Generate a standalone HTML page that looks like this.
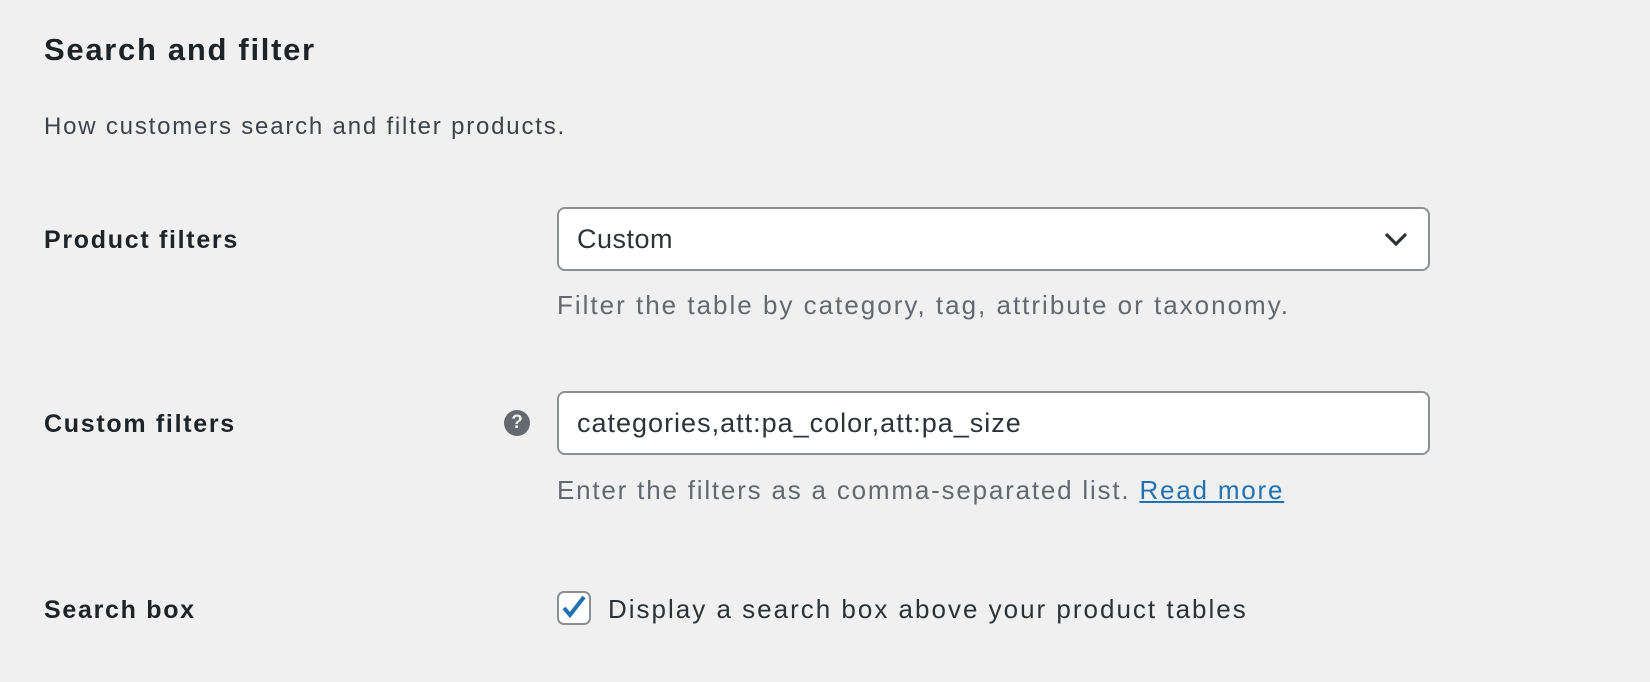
<!DOCTYPE html>
<html><head><meta charset="utf-8"><style>
*{margin:0;padding:0;box-sizing:border-box}
html,body{width:1650px;height:682px;background:#f0f0f1;overflow:hidden;font-family:"Liberation Sans",sans-serif;color:#1d2327}
.a{position:absolute;white-space:nowrap}
h2{position:absolute;left:44px;top:32px;font-size:31px;font-weight:600;letter-spacing:1.7px}
.sub{left:44px;top:113px;font-size:24px;color:#3c434a;letter-spacing:1.8px}
.lbl{left:44px;font-size:25px;font-weight:bold;letter-spacing:1.7px}
.box{position:absolute;left:557px;width:873px;height:64px;background:#fff;border:2px solid #8c8f94;border-radius:8px;font-size:27px;padding-left:18px;line-height:60px;color:#2c3338}
.help{left:557px;font-size:26px;color:#646970;letter-spacing:2px}
.help a{color:#2271b1;text-decoration:underline}
.q{position:absolute;left:504px;top:410px;width:26px;height:26px;border-radius:50%;background:#646970;color:#f0f0f1;font-size:19px;font-weight:bold;text-align:center;line-height:26px}
.cb{position:absolute;left:557px;top:591px;width:34px;height:34px;border:2px solid #8c8f94;border-radius:7px;background:#fff}
</style></head><body>
<h2>Search and filter</h2>
<div class="a sub">How customers search and filter products.</div>

<div class="a lbl" style="top:226px">Product filters</div>
<div class="box" style="top:207px;letter-spacing:0.5px">Custom
<svg style="position:absolute;right:20px;top:22px" width="24" height="16" viewBox="0 0 24 16"><path d="M2 3l10 10 10-10" fill="none" stroke="#2c3338" stroke-width="3.2"/></svg></div>
<div class="a help" style="top:290px">Filter the table by category, tag, attribute or taxonomy.</div>

<div class="a lbl" style="top:410px">Custom filters</div>
<div class="q">?</div>
<div class="box" style="top:391px;letter-spacing:1px">categories,att:pa_color,att:pa_size</div>
<div class="a help" style="top:475px;letter-spacing:1.8px">Enter the filters as a comma-separated list. <a>Read more</a></div>

<div class="a lbl" style="top:596px">Search box</div>
<div class="cb"><svg width="30" height="30" viewBox="0 0 30 30" style="position:absolute;left:0;top:0"><path d="M5 15l6 7L25 4" fill="none" stroke="#2271b1" stroke-width="4"/></svg></div>
<div class="a" style="left:608px;top:594px;font-size:26px;color:#2c3338;letter-spacing:2px">Display a search box above your product tables</div>
</body></html>
